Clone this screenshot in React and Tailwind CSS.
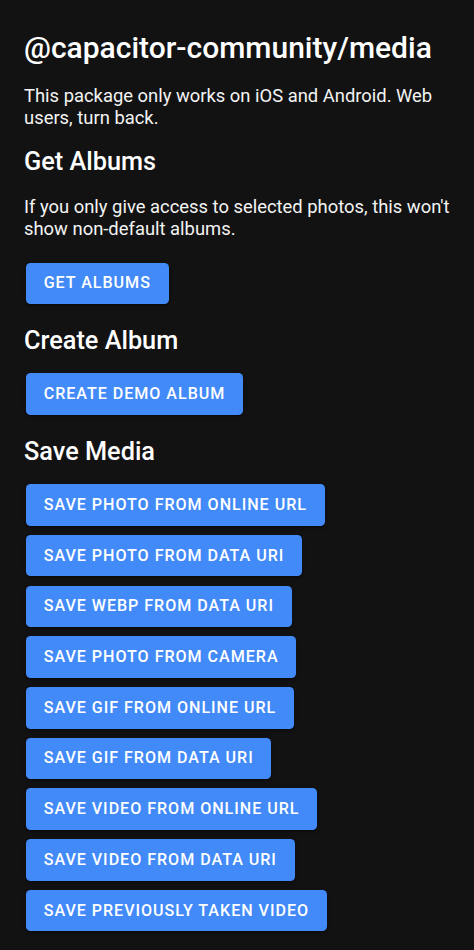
import React from "react";

const saveButtons = [
    "Save photo from online URL",
    "Save photo from data URI",
    "Save WEBP from data URI",
    "Save photo from camera",
    "Save GIF from online URL",
    "Save GIF from data URI",
    "Save video from online URL",
    "Save video from data URI",
    "Save previously taken video",
];

const Button = ({ children }) => (
    <button className="ml-[2px] self-start h-[41.4px] px-[17.7px] rounded-[4.6px] bg-[#428af8] text-white text-[16.1px] font-medium uppercase tracking-[0.06em] leading-none shadow-[0_3px_1px_-2px_rgba(0,0,0,0.2),0_2px_2px_0_rgba(0,0,0,0.14),0_1px_5px_0_rgba(0,0,0,0.12)]">
        {children}
    </button>
);

const Heading = ({ children, className = "" }) => (
    <h2 className={`text-[25.3px] leading-[30.4px] font-medium text-white ${className}`}>{children}</h2>
);

export default function App() {
    return (
        <div className="min-h-[950px] bg-[#121212] text-[#f4f4f4] font-['Roboto',sans-serif] px-6 pt-[30px] pb-6">
            <h1 className="text-[30px] leading-[36px] font-medium text-white">@capacitor-community/media</h1>
            <p className="mt-[19px] text-[18.4px] leading-[22px]">
                This package only works on iOS and Android. Web users, turn back.
            </p>

            {/* Albums */}
            <Heading className="mt-[17.5px]">Get Albums</Heading>
            <p className="mt-[19.4px] text-[18.4px] leading-[22px]">
                If you only give access to selected photos, this won't show non-default albums.
            </p>
            <div className="mt-[22.3px] flex flex-col">
                <Button>Get Albums</Button>
            </div>

            <Heading className="mt-[22.5px]">Create Album</Heading>
            <div className="mt-[16.4px] flex flex-col">
                <Button>Create demo album</Button>
            </div>

            {/* Media */}
            <Heading className="mt-[22.6px]">Save Media</Heading>
            <div className="mt-[16.7px] flex flex-col gap-[9.3px]">
                {saveButtons.map((label) => (
                    <Button key={label}>{label}</Button>
                ))}
            </div>
        </div>
    );
}
